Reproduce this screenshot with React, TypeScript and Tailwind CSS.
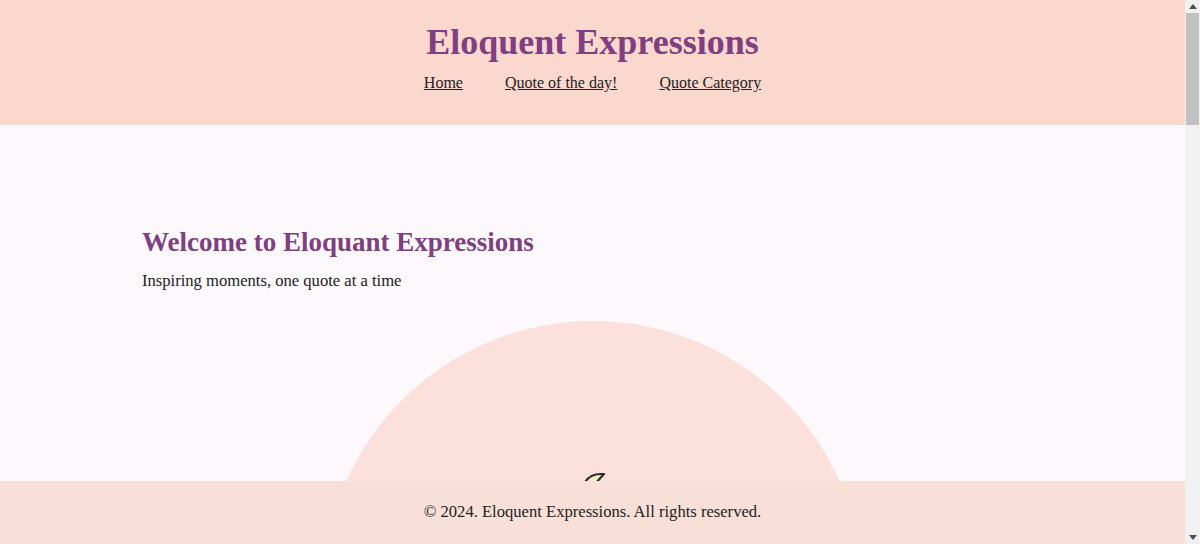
function Scrollbar() {
  return (
    <div className="flex w-[15px] shrink-0 flex-col items-center bg-[#f1f1f1]">
      <div className="flex h-[13px] w-full items-center justify-center">
        <svg width="8" height="5" viewBox="0 0 8 5"><path d="M0 5 L4 0 L8 5 Z" fill="#505050" /></svg>
      </div>
      <div className="h-[112px] w-[13px] bg-[#c1c1c1]" />
      <div className="flex-1" />
      <div className="flex h-[13px] w-full items-center justify-center">
        <svg width="8" height="5" viewBox="0 0 8 5"><path d="M0 0 L8 0 L4 5 Z" fill="#505050" /></svg>
      </div>
    </div>
  );
}

export default function App() {
  return (
    <div className="flex h-[544px] overflow-hidden bg-[#fcf8fc] font-['Liberation_Serif',serif] text-[#222]">
      <div className="flex min-w-0 flex-1 flex-col">
        <div className="min-h-0 flex-1 overflow-hidden">
          <header className="flex h-[125px] flex-col items-center bg-[#fad8ce] pt-[21px]">
            <h1 className="text-[36px] font-bold leading-[42px] text-[#7f3f80]">Eloquent Expressions</h1>
            <nav className="mt-[10px] flex gap-[42px] text-[16px] leading-[20px]">
              <a href="#" className="underline">Home</a>
              <a href="#" className="underline">Quote of the day!</a>
              <a href="#" className="underline">Quote Category</a>
            </nav>
          </header>

          <main className="px-[142px] pt-[101px]">
            <h2 className="text-[27px] font-bold leading-[32px] text-[#7f3f80]">Welcome to Eloquant Expressions</h2>
            <p className="mt-[12px] text-[16.6px] leading-[22px]">Inspiring moments, one quote at a time</p>

            <div className="mt-[29px] flex justify-center">
              <div className="flex h-[540px] w-[540px] shrink-0 items-start justify-center rounded-full bg-[#fce0db] pt-[150px]">
                {/* quill tip, cut off by the footer */}
                <svg width="24" height="14" viewBox="0 0 24 14" className="ml-[2px]">
                  <path d="M2 13 C5 7 11 3 19 3 L22 3 L13 13 Z" fill="#e9f0c4" />
                  <path d="M2 13 C5 7 11 3 19 3 L22 3 L13 13" fill="none" stroke="#2a2a2a" strokeWidth="2.2" strokeLinejoin="round" />
                </svg>
              </div>
            </div>
          </main>
        </div>

        <footer className="flex h-[63px] shrink-0 items-center justify-center bg-[#f8e0d9] text-[16.6px]">
          © 2024. Eloquent Expressions. All rights reserved.
        </footer>
      </div>
      <Scrollbar />
    </div>
  );
}
